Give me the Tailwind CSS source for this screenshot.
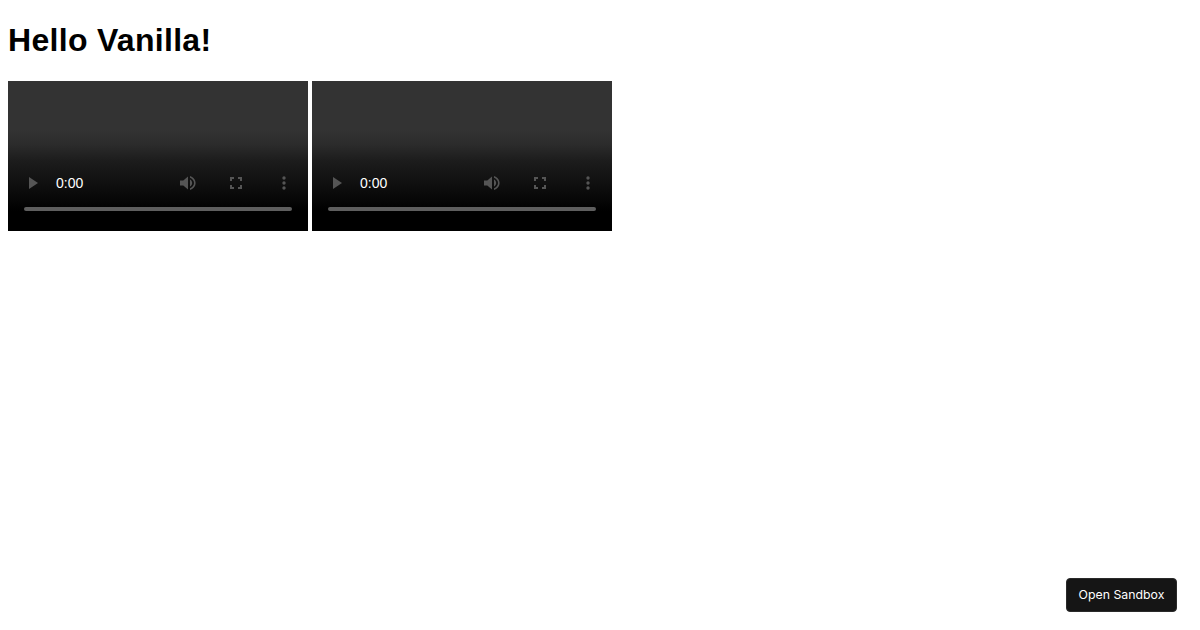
<!doctype html>
<html>
<head>
<meta charset="utf-8">
<script src="https://cdn.jsdelivr.net/npm/@tailwindcss/browser@4"></script>
</head>
<body class="relative h-[630px] overflow-hidden bg-white font-['Liberation_Sans',sans-serif] text-black">
<div class="p-2">
<h1 class="mt-[14px] mb-[22px] text-[32px] leading-[37px] font-bold tracking-[0.3px]">Hello Vanilla!</h1>
<div class="flex gap-1">
<div class="w-[300px] h-[150px] flex flex-col justify-end bg-[linear-gradient(to_bottom,#333_0,#333_48px,#2b2b2b_64px,#1c1c1c_80px,#111_100px,#090909_115px,#000_130px,#000_150px)]">
<div class="flex items-center h-6 pl-5 pr-[22px]">
<svg class="w-3 h-3.5 text-[#555]" viewBox="0 0 12 14"><path fill="currentColor" d="M1 1v12l9-6z"/></svg>
<span class="ml-[16px] text-sm text-white">0:00</span>
<span class="flex-1"></span>
<svg class="w-4 h-4 text-[#555]" viewBox="0 0 16 16"><path fill="currentColor" d="M0 5.500v5h3.300L8 14.500v-13L3.300 5.500zM10 4.500v7c1.300-.6 2.200-2 2.200-3.500s-.9-2.900-2.200-3.500zM10 1v1.700c2 .7 4 2.800 4 5.300s-2 4.600-4 5.300V15c3-.8 5.600-3.600 5.600-7S13 1.800 10 1z"/></svg>
<svg class="ml-[34px] w-3 h-3 text-[#555]" viewBox="0 0 12 12"><path fill="none" stroke="currentColor" stroke-width="2" d="M1 4V1h3M8 1h3v3M11 8v3H8M4 11H1V8"/></svg>
<svg class="ml-[40px] w-1 h-3.5 text-[#555]" viewBox="0 0 4 14"><g fill="currentColor"><circle cx="2" cy="2" r="1.700"/><circle cx="2" cy="7" r="1.700"/><circle cx="2" cy="12" r="1.700"/></g></svg>
</div>
<div class="mx-4 mt-[12px] mb-5 h-1 rounded-full bg-[#5e5e5e]"></div>
</div>
<div class="w-[300px] h-[150px] flex flex-col justify-end bg-[linear-gradient(to_bottom,#333_0,#333_48px,#2b2b2b_64px,#1c1c1c_80px,#111_100px,#090909_115px,#000_130px,#000_150px)]">
<div class="flex items-center h-6 pl-5 pr-[22px]">
<svg class="w-3 h-3.5 text-[#555]" viewBox="0 0 12 14"><path fill="currentColor" d="M1 1v12l9-6z"/></svg>
<span class="ml-[16px] text-sm text-white">0:00</span>
<span class="flex-1"></span>
<svg class="w-4 h-4 text-[#555]" viewBox="0 0 16 16"><path fill="currentColor" d="M0 5.500v5h3.300L8 14.500v-13L3.300 5.500zM10 4.500v7c1.300-.6 2.200-2 2.200-3.500s-.9-2.900-2.200-3.500zM10 1v1.700c2 .7 4 2.800 4 5.300s-2 4.600-4 5.300V15c3-.8 5.600-3.600 5.600-7S13 1.800 10 1z"/></svg>
<svg class="ml-[34px] w-3 h-3 text-[#555]" viewBox="0 0 12 12"><path fill="none" stroke="currentColor" stroke-width="2" d="M1 4V1h3M8 1h3v3M11 8v3H8M4 11H1V8"/></svg>
<svg class="ml-[40px] w-1 h-3.5 text-[#555]" viewBox="0 0 4 14"><g fill="currentColor"><circle cx="2" cy="2" r="1.700"/><circle cx="2" cy="7" r="1.700"/><circle cx="2" cy="12" r="1.700"/></g></svg>
</div>
<div class="mx-4 mt-[12px] mb-5 h-1 rounded-full bg-[#5e5e5e]"></div>
</div>
</div>
</div>
<button class="absolute right-[23px] bottom-[18px] w-[111px] h-[34px] rounded bg-[#151515] border border-[#2a2a2a] text-white text-[12.300px] font-['Inter',sans-serif]">Open Sandbox</button>
</body>
</html>
